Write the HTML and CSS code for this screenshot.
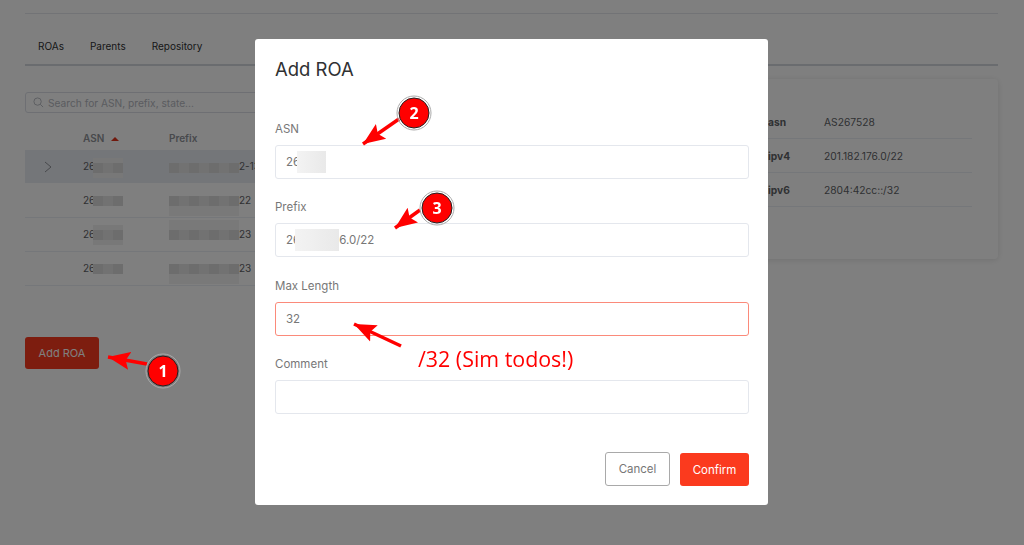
FILE: index.html
```html
<!DOCTYPE html>
<html>
<head>
	<meta charset="UTF-8">
	<title>Add ROA</title>
	<link rel="stylesheet" href="styles.css">
</head>
<body>
	<div id="wrap">
		<div class="topline"></div>
		<div class="tabs">
			<span class="tab">ROAs</span>
			<span class="tab">Parents</span>
			<span class="tab">Repository</span>
		</div>
		<div class="main">
			<div class="left">
				<div class="search">
					<svg class="search-icon" viewBox="0 0 12 12"><circle cx="5" cy="5" r="4"/><path d="M8 8l3 3"/></svg>
					<span>Search for ASN, prefix, state...</span>
				</div>
				<table class="roas">
					<thead>
						<tr>
							<th class="col-arrow"></th>
							<th class="col-asn">ASN <i class="sort"></i></th>
							<th>Prefix</th>
						</tr>
					</thead>
					<tbody>
						<tr class="active">
							<td class="expand"><svg viewBox="0 0 8 12"><path d="M1 1l6 5-6 5"/></svg></td>
							<td>26<span class="blur asn-blur pale-both"></span></td>
							<td><span class="blur prefix-blur"></span>2-13</td>
						</tr>
						<tr>
							<td></td>
							<td>26<span class="blur asn-blur"></span></td>
							<td><span class="blur prefix-blur pale-below"></span>22</td>
						</tr>
						<tr>
							<td></td>
							<td>26<span class="blur asn-blur pale-both"></span></td>
							<td><span class="blur prefix-blur pale-above"></span>23</td>
						</tr>
						<tr>
							<td></td>
							<td>26<span class="blur asn-blur"></span></td>
							<td><span class="blur prefix-blur pale-below"></span>23</td>
						</tr>
					</tbody>
				</table>
				<button class="btn-add">Add ROA</button>
			</div>
			<div class="card">
				<div class="card-row"><b>asn</b><span>AS267528</span></div>
				<div class="card-row"><b>ipv4</b><span>201.182.176.0/22</span></div>
				<div class="card-row"><b>ipv6</b><span>2804:42cc::/32</span></div>
			</div>
		</div>
	</div>

	<div class="overlay">
		<div class="modal">
			<div class="modal-title">Add ROA</div>
			<div class="field">
				<label>ASN</label>
				<div class="input">26<span class="mask mask-asn"></span></div>
			</div>
			<div class="field">
				<label>Prefix</label>
				<div class="input">26<span class="mask mask-prefix"></span>6.0/22</div>
			</div>
			<div class="field">
				<label>Max Length</label>
				<div class="input focus">32</div>
			</div>
			<div class="field">
				<label>Comment</label>
				<div class="input"></div>
			</div>
			<div class="modal-foot">
				<button class="btn-cancel">Cancel</button>
				<button class="btn-confirm">Confirm</button>
			</div>
		</div>
	</div>

	<svg class="marks" viewBox="0 0 1024 545">
		<defs>
			<marker id="head" markerUnits="userSpaceOnUse" markerWidth="24" markerHeight="20" refX="22" refY="10" orient="auto">
				<path d="M0 1L22 10 0 19 4 10z" fill="#f00"/>
			</marker>
		</defs>
		<line class="arrow" x1="147" y1="364" x2="108" y2="357" marker-end="url(#head)"/>
		<line class="arrow" x1="399" y1="119" x2="363" y2="144" marker-end="url(#head)"/>
		<line class="arrow" x1="420" y1="210" x2="395" y2="228" marker-end="url(#head)"/>
		<line class="arrow" x1="401" y1="346" x2="354" y2="324" marker-end="url(#head)"/>
		<g class="badge">
			<circle class="ring" cx="163" cy="371" r="17"/><circle class="dot" cx="163" cy="371" r="15"/><text x="163" y="377">1</text>
		</g>
		<g class="badge">
			<circle class="ring" cx="414" cy="113" r="17"/><circle class="dot" cx="414" cy="113" r="15"/><text x="414" y="119">2</text>
		</g>
		<g class="badge">
			<circle class="ring" cx="437" cy="208" r="17"/><circle class="dot" cx="437" cy="208" r="15"/><text x="437" y="214">3</text>
		</g>
	</svg>
	<div class="note">/32 (Sim todos!)</div>
</body>
</html>
```
FILE: styles.css
```css
*{margin:0;padding:0;box-sizing:border-box;}
html,body{height:100%;overflow:hidden;}
body{
	font-family:Inter,"Liberation Sans",sans-serif;
	font-size:10px;
	color:#606266;
	background:#fff;
}
#wrap{
	padding:0 26px 0 25px;
}
.topline{
	height:14px;
	border-bottom:1px solid #e4e7ed;
}
.tabs{
	display:flex;
	gap:26px;
	height:52px;
	padding:26px 0 0 13px;
	border-bottom:2px solid #d5d8de;
	font-size:10px;
	color:#303133;
}
.main{
	display:grid;
	grid-template-columns:460px 1fr;
	gap:30px;
}
.left{
	padding-top:26px;
}
.search{
	display:flex;
	align-items:center;
	gap:4px;
	height:21px;
	padding-left:7px;
	border:1px solid #dcdfe6;
	border-radius:3px;
	font-size:10.2px;
	color:#b5b8bf;
}
.search-icon{
	width:11px;
	height:11px;
	fill:none;
	stroke:#b5b8bf;
	stroke-width:1;
}
.roas{
	width:100%;
	margin-top:15px;
	border-collapse:collapse;
	table-layout:fixed;
	font-size:10px;
}
.roas th{
	height:22px;
	text-align:left;
	font-weight:600;
	color:#909399;
	vertical-align:top;
	padding-top:4px;
}
.col-arrow{width:58px;}
.col-asn{width:86px;}
.sort{
	display:inline-block;
	width:0;
	height:0;
	margin:0 0 1px 4px;
	border-left:4px solid transparent;
	border-right:4px solid transparent;
	border-bottom:4px solid #e3321a;
}
.roas td{
	height:34px;
	border-bottom:1px solid #ebeef5;
	color:#606266;
}
.roas tr.active td{
	height:33px;
	background:#e9edf3;
	border-bottom:0;
}
.expand{
	padding-left:19px;
}
.expand svg{
	display:block;
	width:8px;
	height:12px;
	fill:none;
	stroke:#909399;
	stroke-width:1;
}
.blur{
	display:inline-block;
	height:10px;
	vertical-align:middle;
	background:repeating-linear-gradient(90deg,#dadada 0 10px,#e4e4e4 10px 20px);
}
.asn-blur{width:30px;margin-left:-2px;}
.prefix-blur{width:70px;}
.pale-below{box-shadow:0 10px 0 #f3f3f3;}
.pale-above{box-shadow:0 -10px 0 #f3f3f3;}
.pale-both{box-shadow:0 -5px 0 #f0f0f0,0 5px 0 #f0f0f0;}
.btn-add{
	display:block;
	width:74px;
	height:32px;
	margin-top:51px;
	border:0;
	border-radius:3px;
	background:#fb3a1e;
	color:#fff;
	font-family:inherit;
	font-size:11px;
}
.card{
	height:180px;
	margin-top:13px;
	padding:26px 26px 0 253px;
	border-radius:4px;
	box-shadow:0 1px 6px rgba(0,0,0,.12);
	font-size:10.25px;
}
.card-row{
	display:grid;
	grid-template-columns:56px 1fr;
	align-items:center;
	height:34px;
	border-bottom:1px solid #ebeef5;
}
.card-row b{
	font-weight:700;
	color:#606266;
}
.overlay{
	position:fixed;
	inset:0;
	display:flex;
	align-items:center;
	justify-content:center;
	padding:0 1px 1px 0;
	background:rgba(0,0,0,.5);
}
.modal{
	width:513px;
	height:466px;
	padding:20px 19px 20px 20px;
	background:#fff;
	border-radius:3px;
}
.modal-title{
	font-size:18.5px;
	line-height:21px;
	color:#303133;
	margin-bottom:40px;
}
.field{
	margin-bottom:19.4px;
}
.field label{
	display:block;
	height:17px;
	margin-bottom:8px;
	font-size:11.5px;
	line-height:19px;
	color:#777;
}
.input{
	display:flex;
	align-items:center;
	height:34px;
	padding-left:10px;
	border:1px solid #e4e7ed;
	border-radius:3px;
	font-size:11.5px;
	color:#777;
}
.input.focus{
	border:1.5px solid #fb8a7a;
}
.mask{
	height:22px;
	background:linear-gradient(90deg,#f3f3f3,#e9e9e9);
}
.mask-asn{width:29px;margin-left:-3px;}
.mask-prefix{width:44px;margin-left:-5px;}
.modal-foot{
	display:flex;
	justify-content:flex-end;
	align-items:flex-end;
	gap:10px;
	margin-top:38px;
}
.btn-cancel,.btn-confirm{
	height:33px;
	border-radius:3px;
	font-family:inherit;
	font-size:11.5px;
}
.btn-cancel{
	width:65px;
	height:34px;
	border:1px solid #a9a9a9;
	background:#fff;
	color:#777;
}
.btn-confirm{
	width:69px;
	border:0;
	background:#fb3a1e;
	color:#fff;
}
.marks{
	position:fixed;
	inset:0;
	width:1024px;
	height:545px;
}
.arrow{
	stroke:#f00;
	stroke-width:3.5;
}
.ring{
	fill:none;
	stroke:#aaa;
	stroke-width:1;
}
.dot{
	fill:#f00;
	stroke:#222;
	stroke-width:1;
}
.badge text{
	font-family:"Open Sans",sans-serif;
	font-weight:700;
	font-size:16px;
	fill:#fff;
	text-anchor:middle;
}
.note{
	position:fixed;
	left:418px;
	top:345px;
	font-family:"Open Sans",sans-serif;
	font-size:21.4px;
	line-height:28px;
	color:#f00;
}
```
